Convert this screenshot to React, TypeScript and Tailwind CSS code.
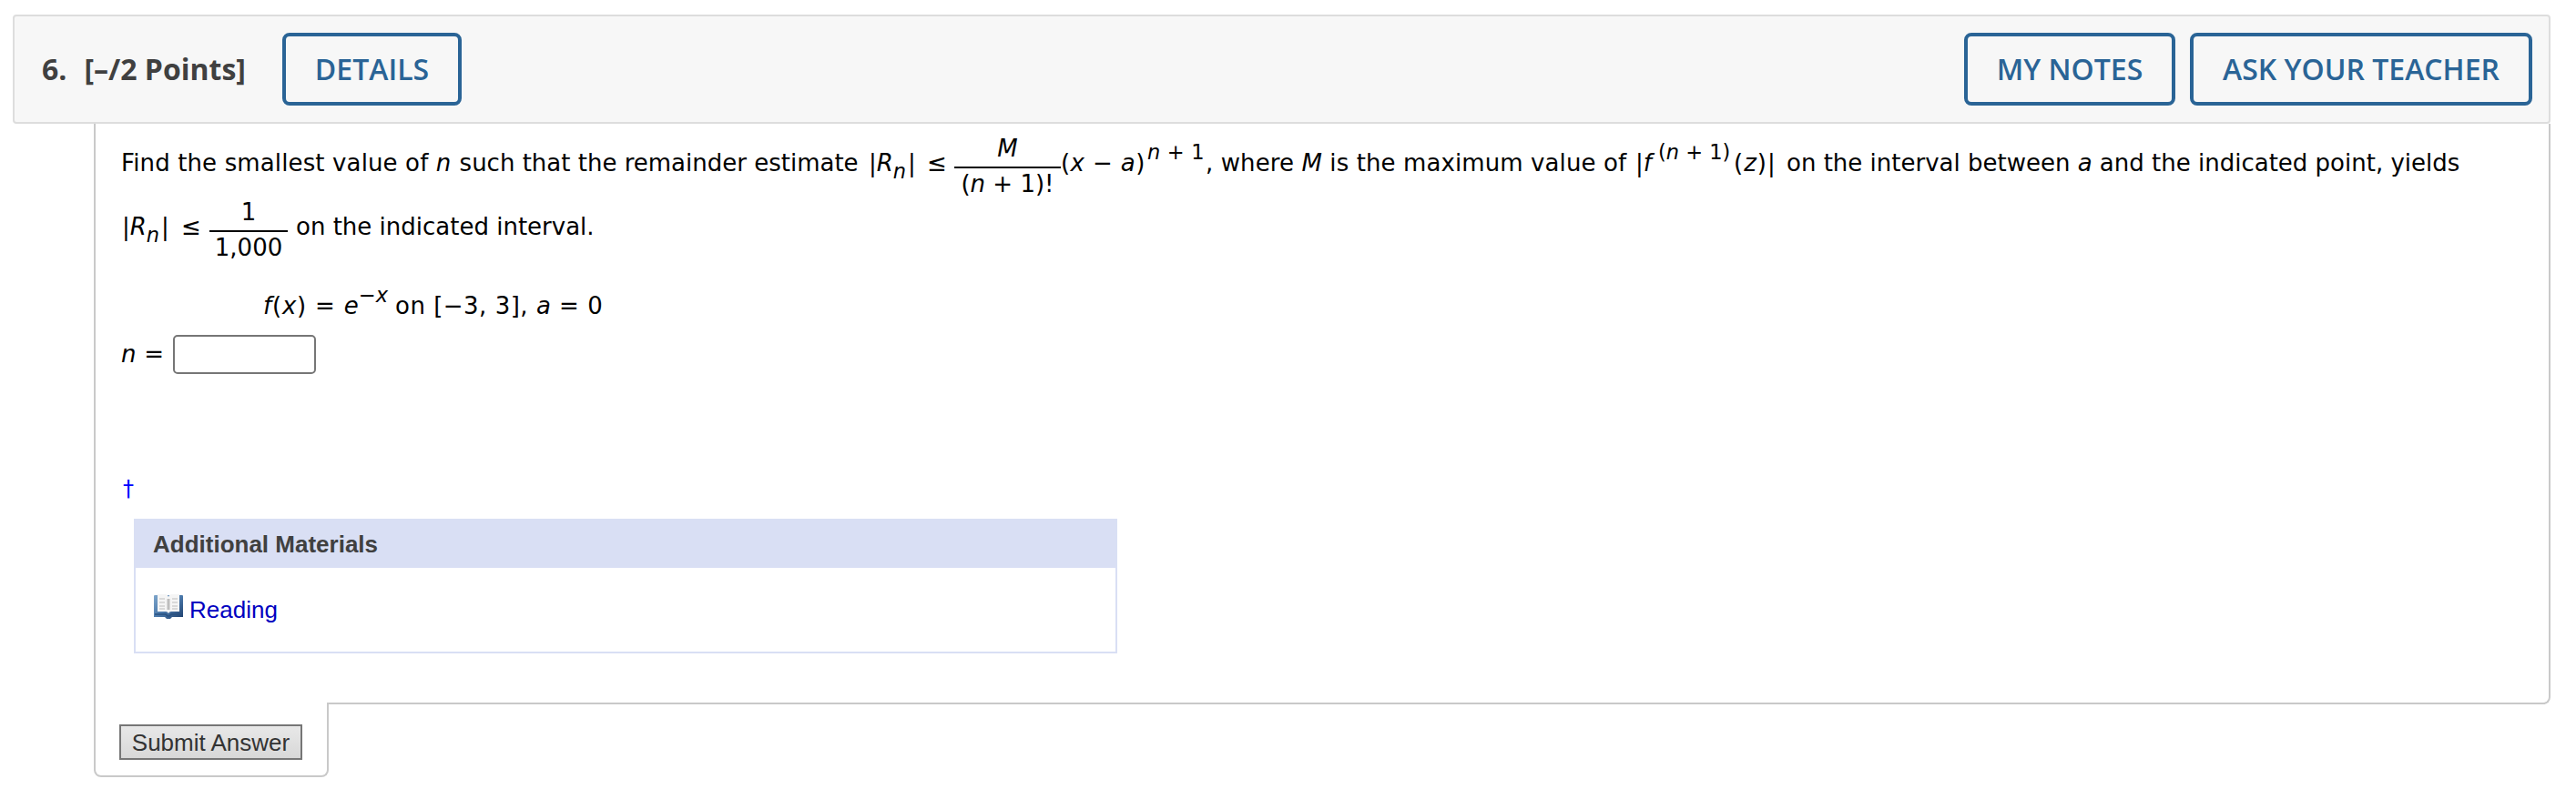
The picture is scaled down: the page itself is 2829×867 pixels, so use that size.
import React from 'react';

const outlineButton =
  'flex h-20 items-center justify-center rounded-lg border-4 border-[#2a6496] font-semibold text-[#2a6496] text-[32px] leading-none';

const mathRow = 'flex h-[70px] items-center pb-[10px]';
const superscript = 'relative top-[-11px] text-[22.5px]';

const RemainderSymbol = () => (
  <span className="flex">
    <span>|</span>
    <i>R</i>
    <i className="relative top-[12px] mr-[2px] text-[22.5px]">n</i>
    <span>|</span>
  </span>
);

interface FractionProps {
  top: React.ReactNode;
  bottom: React.ReactNode;
  className: string;
}

const Fraction: React.FC<FractionProps> = ({ top, bottom, className }) => (
  <span className={`mt-[10px] flex flex-col text-center ${className}`}>
    <span className="h-[34px] leading-[28px]">{top}</span>
    <span className="h-0.5 bg-black" />
    <span className="h-[34px] leading-[34px]">{bottom}</span>
  </span>
);

const BookIcon = () => (
  <svg width="32" height="30" viewBox="0 0 32 30">
    <defs>
      <linearGradient id="cover" x1="0" y1="0" x2="1" y2="1">
        <stop offset="0" stopColor="#7fa6cb" />
        <stop offset="0.500" stopColor="#4a78aa" />
        <stop offset="1" stopColor="#1d3f6c" />
      </linearGradient>
    </defs>
    <path d="M0 4q0-1 1-1h30q1 0 1 1v23H20l-2 2h-4l-2-2H0z" fill="url(#cover)" />
    <path d="M1 24h12l2 2h2l2-2h12" fill="none" stroke="#28507f" strokeWidth="1.500" />
    <path d="M4 2h8q3 0 4 3 1-3 4-3h8v19h-9q-2 0-3 2-1-2-3-2H4z" fill="#f5f5f5" />
    <path d="M14.500 7h3v12h-3z" fill="#bdbdbd" />
    <path d="M6 7h6M6 11h6M6 15h6M6 18h6M20 7h6M20 11h6M20 15h6M20 18h6" stroke="#cfcfcf" strokeWidth="1.500" />
  </svg>
);

export default function App() {
  return (
    <div className="h-[867px] w-[2829px] bg-white pt-4 pl-[14px] text-black">
      <header className="flex h-[120px] w-[2787px] items-start rounded-[4px] border-2 border-[#ddd] bg-[#f7f7f7] pt-[18px] pr-[18px] pl-[30px] font-['Open_Sans',sans-serif]">
        <div className="flex h-20 w-[264px] items-center gap-[19px] text-[32px] font-bold whitespace-nowrap text-[#404040]">
          <span>6.</span>
          <span>[–/2 Points]</span>
        </div>
        <button className={`${outlineButton} w-[197px]`}>DETAILS</button>
        <div className="ml-auto flex gap-4">
          <button className={`${outlineButton} w-[232px]`}>MY NOTES</button>
          <button className={`${outlineButton} w-[376px]`}>ASK YOUR TEACHER</button>
        </div>
      </header>

      <main className="ml-[89px] flex h-[638px] w-[2698px] flex-col rounded-b-lg border-2 border-t-0 border-[#c9c9c9] pl-[28px] font-['DejaVu_Sans',sans-serif] text-[26px] whitespace-pre">
        <div className={`${mathRow} mt-[13px]`}>
          <span className="w-[821px]">
            <span className="tracking-[0.13px]">Find the smallest value of </span>
            <i className="mr-[1px]">n</i> such that the remainder estimate
          </span>
          <span className="w-[64px]"><RemainderSymbol /></span>
          <span className="w-[30px]">≤</span>
          <Fraction className="w-[117px]" top={<i>M</i>} bottom={<>(<i>n</i> + 1)!</>} />
          <span className="w-[95px] tracking-[0.4px]">(<i>x</i> − <i>a</i>)</span>
          <span className={`${superscript} w-[64px] tracking-[0.2px]`}><i>n</i> + 1</span>
          <span className="w-[472px] tracking-[0.1px]">, where <i>M</i> is the maximum value of</span>
          <span className="w-[25px]">|<i>f</i></span>
          <span className={`${superscript} w-[83px]`}>(<i>n</i> + 1)</span>
          <span className="w-[58px] tracking-[1px]">(<i>z</i>)|</span>
          <span>on the interval between <i>a</i> and the indicated point, yields</span>
        </div>
        <div className={`${mathRow} pl-px`}>
          <span className="w-[65px]"><RemainderSymbol /></span>
          <span className="w-[31px]">≤</span>
          <Fraction className="w-[86px]" top="1" bottom="1,000" />
          <span className="ml-[9px]">on the indicated interval.</span>
        </div>
        <div className="mt-[29px] ml-[156px] flex h-[36px] items-center">
          <span className="w-[105px] tracking-[0.8px]"><i>f</i>(<i>x</i>) = <i>e</i></span>
          <span className={`${superscript} w-[40px]`}>−<i>x</i></span>
          <span className="tracking-[0.5px]">on [−3, 3], <i>a</i> = 0</span>
        </div>
        <div className="mt-[14px] flex h-[43px] items-center">
          <span className="w-[57px] tracking-[0.3px]"><i>n</i> =</span>
          <input className="h-[43px] w-[157px] rounded-[5px] border-2 border-[#767676] bg-white" />
        </div>
        <a className="mt-[108px] ml-[2px] h-[51px] text-[24px] text-[#00f]">†</a>
        <section className="ml-[14px] h-[148px] w-[1080px] border-2 border-[#d9dff4] font-['Liberation_Sans',sans-serif]">
          <h3 className="h-[52px] bg-[#d9dff4] pl-[19px] leading-[52px] font-bold text-[#404040]">Additional Materials</h3>
          <a className="flex items-start pt-[27px] pl-5 text-[#0000c0]">
            <BookIcon />
            <span className="ml-[7px]">Reading</span>
          </a>
        </section>
      </main>

      {/* submit tab hangs below the panel and hides the border above it */}
      <div className="relative -mt-0.5 ml-[89px] h-[82px] w-[258px] rounded-b-lg border-2 border-t-0 border-[#c9c9c9] bg-white pt-[24px] pl-[26px]">
        <div className="absolute -top-2 -left-0.5 h-2 w-[256px] border-l-2 border-[#c9c9c9] bg-white" />
        <button className="h-[39px] w-[201px] border-2 border-[#767676] bg-linear-to-b from-[#e8e8e8] to-[#d8d8d8] font-['Liberation_Sans',sans-serif] text-[26px] leading-none text-[#333]">Submit Answer</button>
      </div>
    </div>
  );
}
